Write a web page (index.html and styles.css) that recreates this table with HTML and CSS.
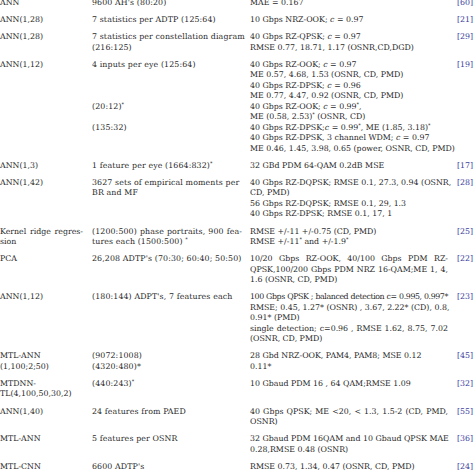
FILE: index.html
```html
<!DOCTYPE html>
<html>
<head>
<meta charset="utf-8">
<link rel="stylesheet" href="styles.css">
</head>
<body>
<div class="table">
  <div class="c1"><span class="l">ANN</span></div>
  <div class="c2"><span class="l">9600 AH's (80:20)</span></div>
  <div class="c3"><span class="l">MAE = 0.167</span></div>
  <div class="c4"><span class="l">[60]</span></div>

  <div class="c1"><span class="l">ANN(1,28)</span></div>
  <div class="c2"><span class="l">7 statistics per ADTP (125:64)</span></div>
  <div class="c3"><span class="l">10 Gbps NRZ-OOK; <i>c</i> = 0.97</span></div>
  <div class="c4"><span class="l">[21]</span></div>

  <div class="c1"><span class="l">ANN(1,28)</span></div>
  <div class="c2"><span class="l">7 statistics per constellation diagram</span><span class="l">(216:125)</span></div>
  <div class="c3"><span class="l">40 Gbps RZ-QPSK; <i>c</i> = 0.97</span><span class="l">RMSE 0.77, 18.71, 1.17 (OSNR,CD,DGD)</span></div>
  <div class="c4"><span class="l">[29]</span></div>

  <div class="c1"><span class="l">ANN(1,12)</span></div>
  <div class="c2"><span class="l">4 inputs per eye (125:64)</span><span class="l">&nbsp;</span><span class="l">&nbsp;</span><span class="l">&nbsp;</span><span class="l">(20:12)<sup>*</sup></span><span class="l">&nbsp;</span><span class="l">(135:32)</span></div>
  <div class="c3"><span class="l">40 Gbps RZ-OOK; <i>c</i> = 0.97</span><span class="l">ME 0.57, 4.68, 1.53 (OSNR, CD, PMD)</span><span class="l">40 Gbps RZ-DPSK; <i>c</i> = 0.96</span><span class="l">ME 0.77, 4.47, 0.92 (OSNR, CD, PMD)</span><span class="l">40 Gbps RZ-OOK; <i>c</i> = 0.99<sup>*</sup>,</span><span class="l">ME (0.58, 2.53)<sup>*</sup> (OSNR, CD)</span><span class="l">40 Gbps RZ-DPSK;<i>c</i> = 0.99<sup>*</sup>, ME (1.85, 3.18)<sup>*</sup></span><span class="l">40 Gbps RZ-DPSK, 3 channel WDM; <i>c</i> = 0.97</span><span class="l">ME 0.46, 1.45, 3.98, 0.65 (power, OSNR, CD, PMD)</span></div>
  <div class="c4"><span class="l">[19]</span></div>

  <div class="c1"><span class="l">ANN(1,3)</span></div>
  <div class="c2"><span class="l">1 feature per eye (1664:832)<sup>*</sup></span></div>
  <div class="c3"><span class="l">32 GBd PDM 64-QAM 0.2dB MSE</span></div>
  <div class="c4"><span class="l">[17]</span></div>

  <div class="c1"><span class="l">ANN(1,42)</span></div>
  <div class="c2"><span class="l">3627 sets of empirical moments per</span><span class="l">BR and MF</span></div>
  <div class="c3"><span class="l j">40 Gbps RZ-DQPSK; RMSE 0.1, 27.3, 0.94 (OSNR,</span><span class="l">CD, PMD)</span><span class="l">56 Gbps RZ-DQPSK; RMSE 0.1, 29, 1.3</span><span class="l">40 Gbps RZ-DPSK; RMSE 0.1, 17, 1</span></div>
  <div class="c4"><span class="l">[28]</span></div>

  <div class="c1"><span class="l j">Kernel ridge regres-</span><span class="l">sion</span></div>
  <div class="c2"><span class="l j">(1200:500) phase portraits, 900 fea-</span><span class="l">tures each (1500:500) <sup>*</sup></span></div>
  <div class="c3"><span class="l">RMSE +/-11 +/-0.75 (CD, PMD)</span><span class="l">RMSE +/-11<sup>*</sup> and +/-1.9<sup>*</sup></span></div>
  <div class="c4"><span class="l">[25]</span></div>

  <div class="c1"><span class="l">PCA</span></div>
  <div class="c2"><span class="l">26,208 ADTP's (70:30; 60:40; 50:50)</span></div>
  <div class="c3"><span class="l j">10/20 Gbps RZ-OOK, 40/100 Gbps PDM RZ-</span><span class="l j">QPSK,100/200 Gbps PDM NRZ 16-QAM;ME 1, 4,</span><span class="l">1.6 (OSNR, CD, PMD)</span></div>
  <div class="c4"><span class="l">[22]</span></div>

  <div class="c1"><span class="l">ANN(1,12)</span></div>
  <div class="c2"><span class="l">(180:144) ADPT's, 7 features each</span></div>
  <div class="c3"><span class="l j tight">100 Gbps QPSK ; balanced detection c= 0.995, 0.997*</span><span class="l j">RMSE; 0.45, 1.27* (OSNR) , 3.67, 2.22* (CD), 0.8,</span><span class="l">0.91* (PMD)</span><span class="l j">single detection; c=0.96 , RMSE 1.62, 8.75, 7.02</span><span class="l">(OSNR, CD, PMD)</span></div>
  <div class="c4"><span class="l">[23]</span></div>

  <div class="c1"><span class="l">MTL-ANN</span><span class="l">(1,100;2;50)</span></div>
  <div class="c2"><span class="l">(9072:1008)</span><span class="l">(4320:480)*</span></div>
  <div class="c3"><span class="l">28 Gbd NRZ-OOK, PAM4, PAM8; MSE 0.12</span><span class="l">0.11*</span></div>
  <div class="c4"><span class="l">[45]</span></div>

  <div class="c1"><span class="l">MTDNN-</span><span class="l">TL(4,100,50,30,2)</span></div>
  <div class="c2"><span class="l">(440:243)<sup>*</sup></span></div>
  <div class="c3"><span class="l">10 Gbaud PDM 16 , 64 QAM;RMSE 1.09</span></div>
  <div class="c4"><span class="l">[32]</span></div>

  <div class="c1"><span class="l">ANN(1,40)</span></div>
  <div class="c2"><span class="l">24 features from PAED</span></div>
  <div class="c3"><span class="l j">40 Gbps QPSK; ME &lt;20, &lt; 1.3, 1.5-2 (CD, PMD,</span><span class="l">OSNR)</span></div>
  <div class="c4"><span class="l">[55]</span></div>

  <div class="c1"><span class="l">MTL-ANN</span></div>
  <div class="c2"><span class="l">5 features per OSNR</span></div>
  <div class="c3"><span class="l j">32 Gbaud PDM 16QAM and 10 Gbaud QPSK MAE</span><span class="l">0.28,RMSE 0.48 (OSNR)</span></div>
  <div class="c4"><span class="l">[36]</span></div>

  <div class="c1"><span class="l">MTL-CNN</span></div>
  <div class="c2"><span class="l">6600 ADTP's</span></div>
  <div class="c3"><span class="l">RMSE 0.73, 1.34, 0.47 (OSNR, CD, PMD)</span></div>
  <div class="c4"><span class="l">[24]</span></div>
</div>
</body>
</html>
```
FILE: styles.css
```css
html, body {
  margin: 0;
  padding: 0;
  background: #ffffff;
  overflow: hidden;
}
body {
  width: 474px;
  height: 474px;
  font-family: "DejaVu Serif", "Liberation Serif", serif;
  font-size: 7.85px;
  color: #2a2a2a;
}
.table {
  display: grid;
  grid-template-columns: 92px 158px 207px 17px;
  row-gap: 6.6px;
  margin-top: -2px;
}
.c1 { padding-right: 9px; }
.c2 { padding-right: 8px; letter-spacing: 0.12px; }
.c3 { padding-right: 9px; }
.c4 { color: #3d3d9e; }
.l {
  display: block;
  line-height: 10.5px;
  height: 10.5px;
  white-space: nowrap;
}
.j {
  text-align: justify;
  text-align-last: justify;
}
.tight {
  letter-spacing: -0.4px;
}
sup {
  font-size: 5px;
  line-height: 0;
  vertical-align: 3px;
}
i { font-style: italic; }
```
